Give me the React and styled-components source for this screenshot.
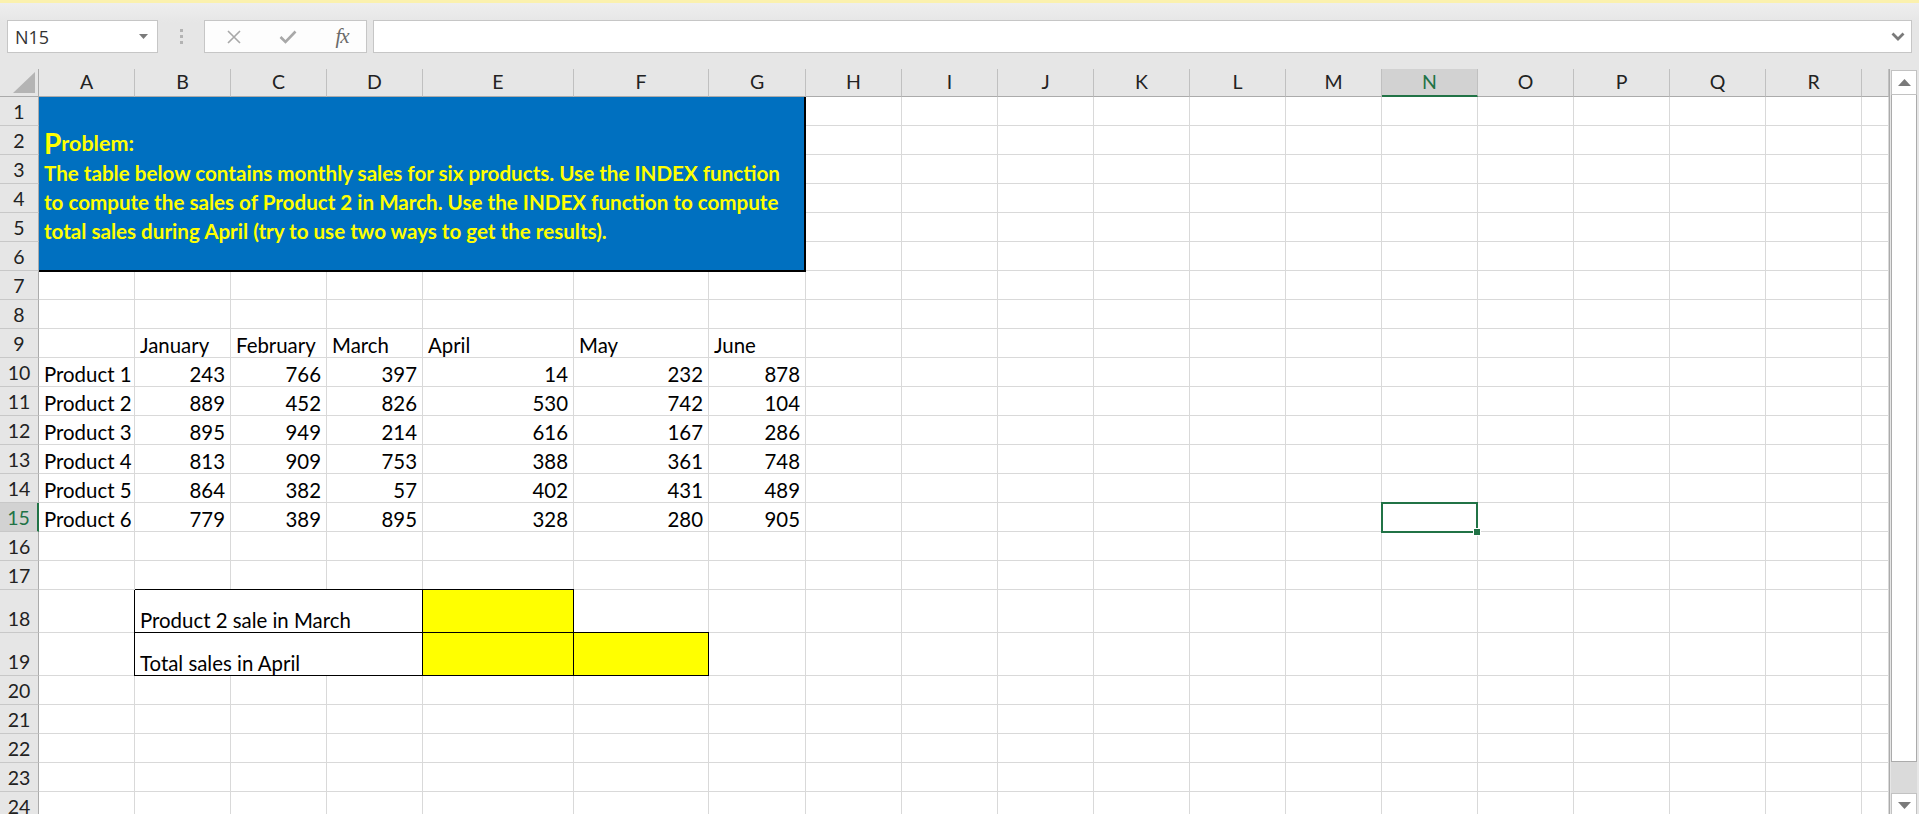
import React from 'react';
import styled, { createGlobalStyle, css } from 'styled-components';

const GlobalStyle = createGlobalStyle`
  html, body { margin: 0; padding: 0; }
  body {
    background: #e6e6e6;
    overflow: hidden;
    font-family: Lato, "Liberation Sans", sans-serif;
  }
`;

const Page = styled.div`
  width: 1919px;
  height: 814px;
  display: flex;
  flex-direction: column;
  overflow: hidden;
  background: #e6e6e6;
`;

const TopStrip = styled.div`
  height: 3px;
  background: #fbf1ae;
  flex: none;
`;

const FormulaBar = styled.div`
  height: 66px;
  flex: none;
  display: flex;
  align-items: flex-start;
  padding: 17px 7px 0 7px;
  box-sizing: border-box;
  background: linear-gradient(#eeeeee, #e6e6e6 30%);
`;

const NameBox = styled.div`
  width: 151px;
  height: 33px;
  box-sizing: border-box;
  background: #ffffff;
  border: 1px solid #c6c6c6;
  display: flex;
  align-items: center;
  justify-content: space-between;
  padding: 0 9px 0 7px;
  font-family: "Open Sans", "Liberation Sans", sans-serif;
  font-size: 18px;
  color: #333;
`;

const Dots = styled.div`
  width: 46px;
  height: 33px;
  display: flex;
  flex-direction: column;
  align-items: center;
  justify-content: center;
  gap: 3px;
  span {
    width: 3px;
    height: 3px;
    background: #b3b3b3;
  }
`;

const FxBox = styled.div`
  width: 163px;
  height: 33px;
  box-sizing: border-box;
  background: #fdfdfd;
  border: 1px solid #c6c6c6;
  display: flex;
  align-items: center;
  padding: 0 0 0 19px;
`;

const FxIcon = styled.div`
  width: ${p => p.$w}px;
  display: flex;
  justify-content: center;
  align-items: center;
`;

const FxText = styled.span`
  font-family: "Liberation Serif", serif;
  font-style: italic;
  font-size: 21px;
  color: #6a6a6a;
  letter-spacing: -1px;
  line-height: 1;
`;

const FormulaInput = styled.div`
  flex: 1;
  margin-left: 6px;
  height: 33px;
  box-sizing: border-box;
  background: #ffffff;
  border: 1px solid #c6c6c6;
  display: flex;
  align-items: center;
  justify-content: flex-end;
  padding-right: 6px;
`;

const Main = styled.div`
  flex: 1;
  display: flex;
  min-height: 0;
`;

const Sheet = styled.div`
  width: 1890px;
  flex: none;
  display: grid;
  grid-template-columns: 39px repeat(4, 96px) 151px 135px 97px repeat(11, 96px) 27px;
  grid-template-rows: 28px repeat(17, 29px) repeat(2, 43px) repeat(5, 29px);
  overflow: hidden;
  align-content: start;
  border-right: 1px solid #ababab;
  box-sizing: border-box;
  background: #ffffff;
  font-family: Lato, "Liberation Sans", sans-serif;
`;

const Corner = styled.div`
  background: #e6e6e6;
  border-right: 1px solid #ababab;
  border-bottom: 1px solid #ababab;
  box-sizing: border-box;
  display: flex;
  align-items: flex-end;
  justify-content: flex-end;
  padding: 0 3px 3px 0;
`;

const ColHeader = styled.div`
  background: ${p => (p.$active ? '#d2d2d2' : '#e6e6e6')};
  border-right: 1px solid #c0c0c0;
  border-bottom: ${p => (p.$active ? '2px solid #217346' : '1px solid #ababab')};
  box-sizing: border-box;
  display: flex;
  align-items: flex-end;
  justify-content: center;
  padding-bottom: ${p => (p.$active ? 3 : 4)}px;
  font-size: 19.5px;
  line-height: 20px;
  color: ${p => (p.$active ? '#217346' : '#222')};
`;

const RowHeader = styled.div`
  background: ${p => (p.$active ? '#d2d2d2' : '#e6e6e6')};
  border-right: ${p => (p.$active ? '2px solid #217346' : '1px solid #ababab')};
  border-bottom: 1px solid #c8c8c8;
  box-sizing: border-box;
  display: flex;
  align-items: flex-end;
  justify-content: center;
  padding-bottom: 3px;
  font-size: 19.5px;
  line-height: 20px;
  color: ${p => (p.$active ? '#217346' : '#222')};
`;

const Cell = styled.div`
  position: relative;
  box-sizing: border-box;
  border-right: 1px solid #d9d9d9;
  border-bottom: 1px solid #d9d9d9;
  background: ${p => p.$bg || '#ffffff'};
  display: flex;
  align-items: flex-end;
  justify-content: ${p => (p.$align === 'right' ? 'flex-end' : 'flex-start')};
  padding: 0 5px 2px 5px;
  font-size: 20.4px;
  line-height: 20px;
  color: #000;
  white-space: nowrap;
  grid-column: span ${p => p.$span || 1};
  ${p =>
    p.$boxed &&
    css`
      border-right-color: #000;
      border-bottom-color: #000;
      z-index: 1;
      box-shadow: ${[
        p.$top ? '0 -1px 0 #000' : null,
        p.$left ? '-1px 0 0 #000' : null,
      ]
        .filter(Boolean)
        .join(', ') || 'none'};
    `}
`;

const Selection = styled.div`
  position: absolute;
  top: -1px;
  left: -1px;
  right: -1px;
  bottom: -2px;
  border: 2px solid #217346;
  pointer-events: none;
  z-index: 2;
`;

const FillHandle = styled.div`
  position: absolute;
  right: -5px;
  bottom: -5px;
  width: 6px;
  height: 6px;
  background: #217346;
  border: 1px solid #ffffff;
`;

const BlueBox = styled.div`
  grid-column: span 7;
  grid-row: span 6;
  background: #0070c0;
  border-right: 2px solid #000;
  border-bottom: 2px solid #000;
  margin-bottom: -1px;
  display: grid;
  grid-template-rows: repeat(6, 29px);
  padding-left: 5px;
  color: #ffff00;
  font-weight: 700;
  white-space: nowrap;
  position: relative;
  z-index: 1;
`;

const BlueLine = styled.div`
  display: flex;
  align-items: flex-end;
  font-size: 20.6px;
  line-height: 20px;
  padding-bottom: ${p => p.$pb || 1}px;
`;

const BigLetter = styled.span`
  font-size: 28px;
  line-height: 20px;
`;

const TitleRest = styled.span`
  font-size: 21.5px;
  line-height: 20px;
  font-weight: 700;
`;

const VScroll = styled.div`
  flex: 1;
  display: flex;
  flex-direction: column;
  padding: 1px 2px 0 1px;
  box-sizing: border-box;
`;

const ScrollButton = styled.div`
  height: 25px;
  flex: none;
  background: #ffffff;
  border: 1px solid #c2c2c2;
  box-sizing: border-box;
  display: flex;
  align-items: center;
  justify-content: center;
`;

const Thumb = styled.div`
  height: 667px;
  flex: none;
  background: #ffffff;
  border: 1px solid #ababab;
  border-top: none;
  box-sizing: border-box;
`;

const Track = styled.div`
  height: 31px;
  flex: none;
  background: #dadada;
`;

const COLS = ['A', 'B', 'C', 'D', 'E', 'F', 'G', 'H', 'I', 'J', 'K', 'L', 'M', 'N', 'O', 'P', 'Q', 'R', ''];
const ROWS = Array.from({ length: 24 }, (_, i) => i + 1);

const DATA = {
  9: ['', 'January', 'February', 'March', 'April', 'May', 'June'],
  10: ['Product 1', 243, 766, 397, 14, 232, 878],
  11: ['Product 2', 889, 452, 826, 530, 742, 104],
  12: ['Product 3', 895, 949, 214, 616, 167, 286],
  13: ['Product 4', 813, 909, 753, 388, 361, 748],
  14: ['Product 5', 864, 382, 57, 402, 431, 489],
  15: ['Product 6', 779, 389, 895, 328, 280, 905],
};

const ACTIVE_ROW = 15;
const ACTIVE_COL = 13;

function plainCells(r, from) {
  const out = [];
  for (let i = from; i < COLS.length; i++) {
    const v = DATA[r] ? DATA[r][i] : undefined;
    const active = r === ACTIVE_ROW && i === ACTIVE_COL;
    out.push(
      <Cell key={`${r}-${i}`} $align={typeof v === 'number' ? 'right' : 'left'}>
        {v}
        {active && (
          <Selection>
            <FillHandle />
          </Selection>
        )}
      </Cell>
    );
  }
  return out;
}

function renderRow(r) {
  const items = [
    <RowHeader key={`h${r}`} $active={r === ACTIVE_ROW}>
      {r}
    </RowHeader>,
  ];
  if (r === 1) {
    items.push(
      <BlueBox key="blue">
        <BlueLine />
        <BlueLine $pb={2}>
          <BigLetter>P</BigLetter>
          <TitleRest>roblem:</TitleRest>
        </BlueLine>
        <BlueLine>The table below contains monthly sales for six products. Use the INDEX function</BlueLine>
        <BlueLine>to compute the sales of Product 2 in March. Use the INDEX function to compute</BlueLine>
        <BlueLine>total sales during April (try to use two ways to get the results).</BlueLine>
        <BlueLine />
      </BlueBox>
    );
    items.push(...plainCells(r, 7));
  } else if (r >= 2 && r <= 6) {
    items.push(...plainCells(r, 7));
  } else if (r === 18) {
    items.push(<Cell key="18a" />);
    items.push(
      <Cell key="18b" $span={3} $boxed $top $left>
        Product 2 sale in March
      </Cell>
    );
    items.push(<Cell key="18e" $boxed $top $bg="#ffff00" />);
    items.push(...plainCells(r, 5));
  } else if (r === 19) {
    items.push(<Cell key="19a" />);
    items.push(
      <Cell key="19b" $span={3} $boxed $left>
        Total sales in April
      </Cell>
    );
    items.push(<Cell key="19e" $boxed $bg="#ffff00" />);
    items.push(<Cell key="19f" $boxed $top $bg="#ffff00" />);
    items.push(...plainCells(r, 6));
  } else {
    items.push(...plainCells(r, 0));
  }
  return items;
}

export default function App() {
  return (
    <Page>
      <GlobalStyle />
      <TopStrip />
      <FormulaBar>
        <NameBox>
          <span>N15</span>
          <svg width="9" height="5" viewBox="0 0 9 5">
            <path d="M0 0 H9 L4.5 5 Z" fill="#7a7a7a" />
          </svg>
        </NameBox>
        <Dots>
          <span />
          <span />
          <span />
        </Dots>
        <FxBox>
          <FxIcon $w={20}>
            <svg width="16" height="16" viewBox="0 0 16 16">
              <path d="M2 2 L14 14 M14 2 L2 14" stroke="#a8a8a8" strokeWidth="1.6" fill="none" />
            </svg>
          </FxIcon>
          <FxIcon $w={88}>
            <svg width="18" height="14" viewBox="0 0 18 14">
              <path d="M1.5 7 L6.5 12 L16.5 1.5" stroke="#a8a8a8" strokeWidth="2.6" fill="none" />
            </svg>
          </FxIcon>
          <FxIcon $w={20}>
            <FxText>fx</FxText>
          </FxIcon>
        </FxBox>
        <FormulaInput>
          <svg width="14" height="9" viewBox="0 0 14 9">
            <path d="M1.5 1.5 L7 7 L12.5 1.5" stroke="#7a7a7a" strokeWidth="2.8" fill="none" />
          </svg>
        </FormulaInput>
      </FormulaBar>
      <Main>
        <Sheet>
          <Corner>
            <svg width="22" height="21" viewBox="0 0 22 21">
              <path d="M22 0 V21 H0 Z" fill="#b4b4b4" />
            </svg>
          </Corner>
          {COLS.map((c, i) => (
            <ColHeader key={`c${i}`} $active={i === ACTIVE_COL}>
              {c}
            </ColHeader>
          ))}
          {ROWS.map(r => renderRow(r))}
        </Sheet>
        <VScroll>
          <ScrollButton>
            <svg width="13" height="7" viewBox="0 0 13 7">
              <path d="M0 7 L6.5 0 L13 7 Z" fill="#7a7a7a" />
            </svg>
          </ScrollButton>
          <Thumb />
          <Track />
          <ScrollButton>
            <svg width="13" height="7" viewBox="0 0 13 7">
              <path d="M0 0 L6.5 7 L13 0 Z" fill="#7a7a7a" />
            </svg>
          </ScrollButton>
        </VScroll>
      </Main>
    </Page>
  );
}
